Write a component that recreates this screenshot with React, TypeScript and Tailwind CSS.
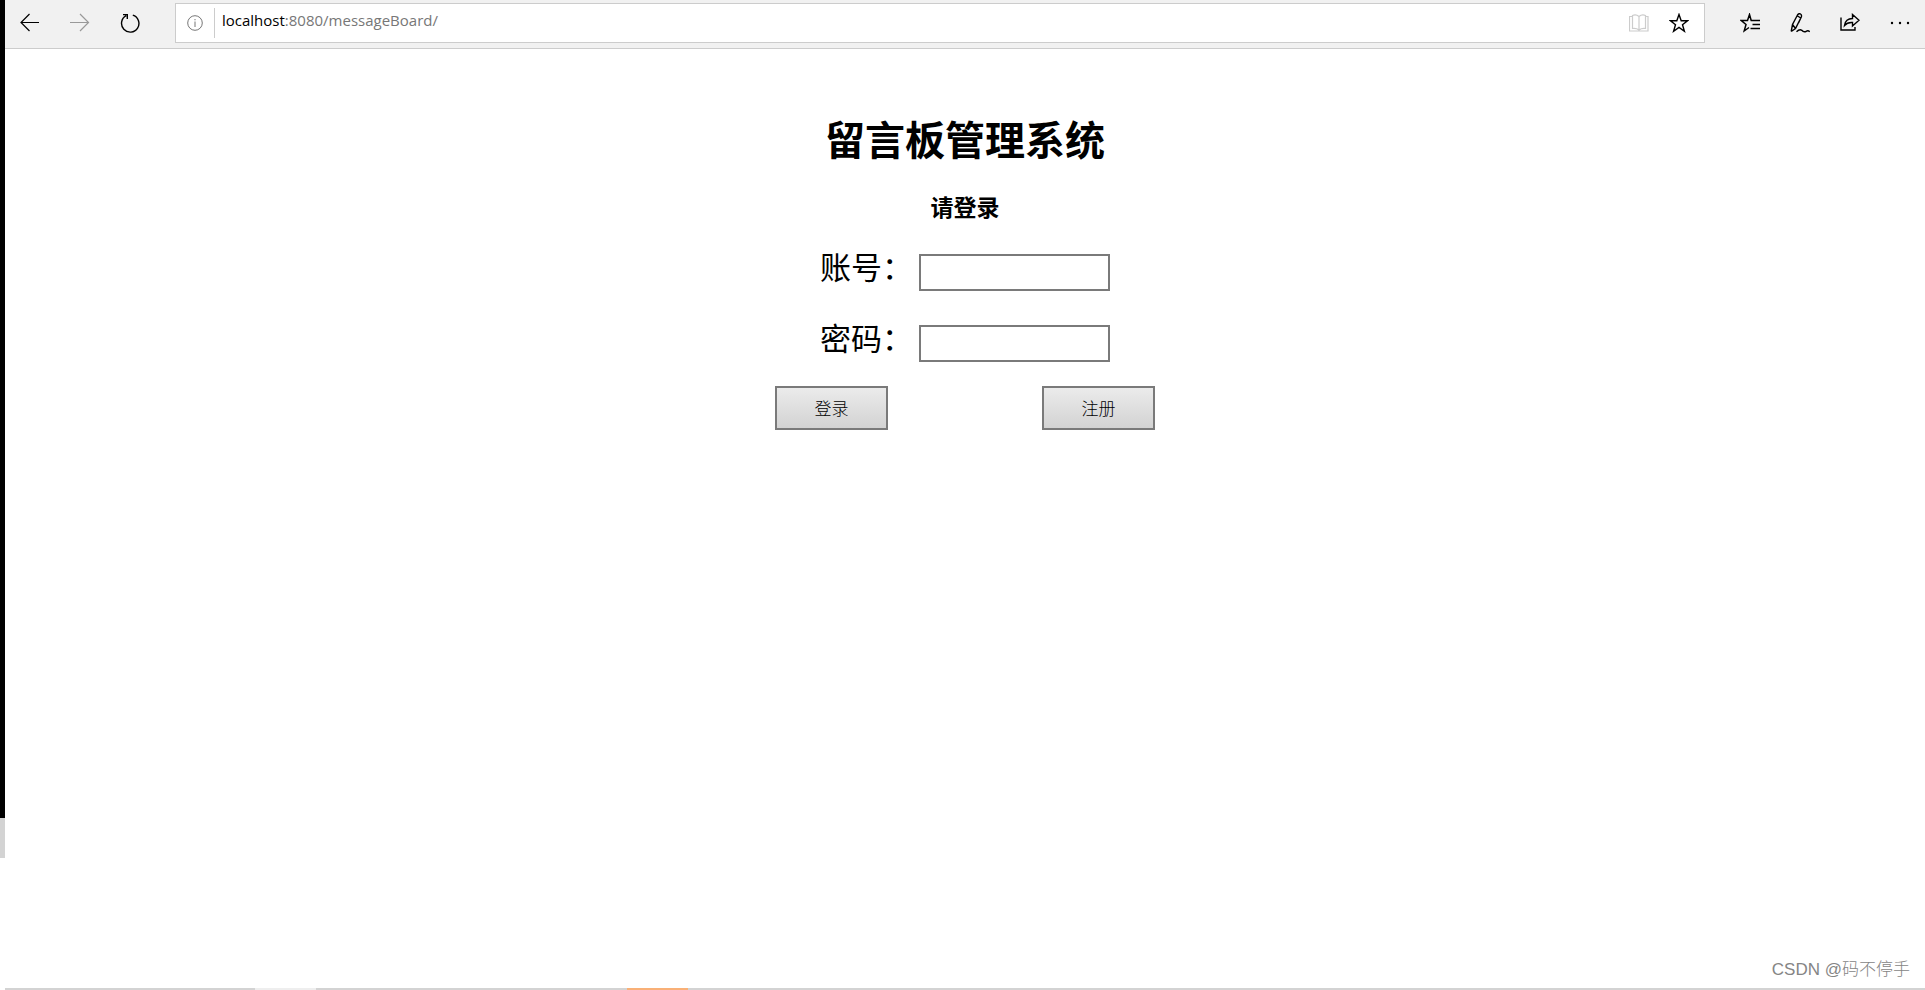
import type { ReactNode } from "react";

function Stroke({ children, className }: { children: ReactNode; className?: string }) {
  return (
    <svg
      aria-hidden="true"
      width="20"
      height="20"
      viewBox="0 0 20 20"
      fill="none"
      stroke="currentColor"
      strokeWidth="1.2"
      className={className}
    >
      {children}
    </svg>
  );
}

function ToolButton({ label, children, className = "" }: { label: string; children: ReactNode; className?: string }) {
  return (
    <button type="button" aria-label={label} className={`flex h-10 w-[50px] items-center justify-center ${className}`}>
      {children}
    </button>
  );
}

function Toolbar() {
  return (
    <header className="flex h-[49px] items-start border-b border-[#cccccc] bg-[#f1f1f1] pt-[3px] text-black">
      <ToolButton label="后退">
        <Stroke>
          <path d="M19 9.500H1M9.500 1L1 9.500L9.500 18" />
        </Stroke>
      </ToolButton>
      <ToolButton label="前进" className="text-[#999999]">
        <Stroke>
          <path d="M0 9.500h18.500M10 1l8.500 8.500L10 18" />
        </Stroke>
      </ToolButton>
      <ToolButton label="刷新">
        <Stroke>
          <path d="M12.800 2.100A8.700 8.700 0 1 1 6.200 2.700M3 1.600H7.300V6" strokeWidth="1.4" />
        </Stroke>
      </ToolButton>
      <div className="ml-5 flex h-10 flex-1 items-center border border-[#cccccc] bg-white">
        <button type="button" aria-label="网站信息" className="flex h-full w-[38px] items-center justify-center text-[#777777]">
          <svg aria-hidden="true" width="16" height="16" viewBox="0 0 16 16" fill="none" stroke="currentColor">
            <circle cx="8" cy="8" r="7.300" />
            <path d="M8 6.500V12M8 4v1.300" />
          </svg>
        </button>
        <div className="h-[30px] w-px bg-[#cccccc]" />
        <p className="flex-1 pb-1.5 pl-[7px] font-['Open_Sans',sans-serif] text-[15px] leading-6 text-[#777777]">
          <span className="text-black">localhost</span>:8080/messageBoard/
        </p>
        <button type="button" aria-label="阅读视图" className="flex h-full w-10 items-center justify-center text-[#cccccc]">
          <Stroke>
            <path d="M10 3.500Q7 1 3.500 2.500V15.500Q7.500 15 10 17Q12.500 15 16.500 15.500V2.500Q13 1 10 3.500V17M3.500 3.500h-3v14.500h18.500v-14.500h-2.500" />
          </Stroke>
        </button>
        <button type="button" aria-label="添加到收藏夹" className="mr-[5px] flex h-full w-10 items-center justify-center">
          <Stroke>
            <path d="M10 1.500l2.200 6.300h6.300l-5 4 1.900 6.400-5.400-3.800-5.400 3.800 1.900-6.400-5-4h6.300z" strokeWidth="1.4" />
          </Stroke>
        </button>
      </div>
      <div className="ml-5 flex">
        <ToolButton label="收藏夹">
          <Stroke>
            <path d="M12 7.500H11.200L9.500 1.500L7.500 7.500H1.200L6 11.500L4.200 18L9 14.500M11 7.500h9M12.500 11.500h7.500M10.500 15.500h9.500" strokeWidth="1.5" />
          </Stroke>
        </ToolButton>
        <ToolButton label="添加笔记">
          <Stroke>
            <path d="M1.200 18.500L2.500 11.500L7.500 2Q8.800 0 10.500 1Q12 2 11.300 4L5.500 15.500L1.200 18.500M2.500 11.500L5.500 15.500M7.500 3L10.800 5L8.500 10M6.500 18.800Q9.500 15.800 11.800 17.300Q13.500 19.500 16 18.500Q18 17 19.800 18.800" strokeWidth="1.400" />
          </Stroke>
        </ToolButton>
        <ToolButton label="共享">
          <Stroke>
            <path d="M1 4.500V17H15V14M4.500 12.500Q5.500 5.500 12.500 5.500V1.500L19 7.300L12.500 13V9.500Q7.500 9 4.500 12.500z" strokeWidth="1.400" />
          </Stroke>
        </ToolButton>
        <ToolButton label="更多">
          <Stroke>
            <g fill="currentColor" stroke="none">
              <circle cx="2" cy="10" r="1.200" />
              <circle cx="10" cy="10" r="1.200" />
              <circle cx="18" cy="10" r="1.200" />
            </g>
          </Stroke>
        </ToolButton>
      </div>
    </header>
  );
}

function Field({ id, label, type }: { id: string; label: string; type: string }) {
  return (
    <div className="flex items-start">
      <label htmlFor={id} className="w-[99px] whitespace-nowrap text-[31px] leading-8">
        {label}
      </label>
      <input id={id} type={type} className="mt-1 h-[37px] w-[191px] border-2 border-[#7a7a7a] bg-white px-1 text-[17px]" />
    </div>
  );
}

const buttonClass =
  "h-11 w-[113px] border-2 border-[#7a7a7a] bg-linear-to-b from-[#ebebeb] to-[#d3d3d3] text-[17px] font-light leading-6 text-black";

function LoginForm() {
  return (
    <main className="flex flex-1 flex-col items-center pt-[59px]">
      <h1 className="text-[40px] font-bold leading-[60px]">留言板管理系统</h1>
      <h3 className="mt-5 text-[23px] font-bold leading-9">请登录</h3>
      <form className="flex w-[380px] flex-col" onSubmit={(event) => event.preventDefault()}>
        <div className="mt-[26px] flex flex-col items-center gap-[30px]">
          <Field id="account" label="账号：" type="text" />
          <Field id="password" label="密码：" type="password" />
        </div>
        <div className="mt-6 flex justify-between">
          <button type="submit" className={buttonClass}>
            登录
          </button>
          <button type="button" className={buttonClass}>
            注册
          </button>
        </div>
      </form>
    </main>
  );
}

export default function App() {
  return (
    <div className="flex min-h-screen bg-white font-['Noto_Sans_CJK_SC',sans-serif] text-black">
      <div className="flex w-[5px] shrink-0 flex-col">
        <div className="flex-[818] bg-black" />
        <div className="flex-[40] bg-[#d3d3d3]" />
        <div className="flex-[132]" />
      </div>
      <div className="flex min-w-0 flex-1 flex-col">
        <Toolbar />
        <LoginForm />
        <footer>
          <p className="pb-1.5 pr-[15px] text-right font-['Liberation_Sans','Noto_Sans_CJK_SC',sans-serif] text-[17px] font-light leading-6 text-[#858585]">
            CSDN @码不停手
          </p>
          <div className="flex h-[2px] bg-[#d3d3d3]">
            <div className="ml-[250px] w-[61px] bg-[#eeeeee]" />
            <div className="ml-[311px] w-[61px] bg-[#f9b077]" />
          </div>
        </footer>
      </div>
    </div>
  );
}
